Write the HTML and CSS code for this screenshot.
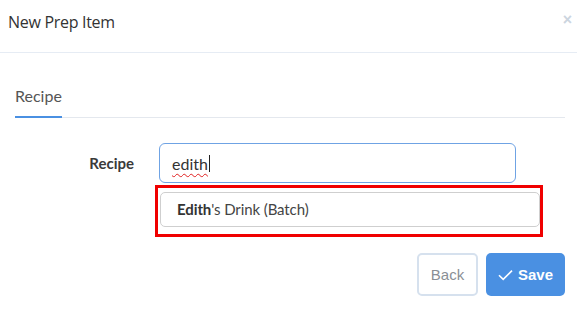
FILE: index.html
```html
<!DOCTYPE html>
<html>
<head>
<meta charset="utf-8">
<link rel="stylesheet" href="styles.css">
</head>
<body>
<div class="modal">
  <div class="modal-header">
    <div class="modal-title">New Prep Item</div>
    <div class="close">&times;</div>
  </div>
  <div class="modal-body">
    <div class="tabs">
      <div class="tab active">Recipe</div>
    </div>
    <div class="form-row">
      <label class="label">Recipe</label>
      <div class="field">
        <div class="input"><span class="typed">edith</span><span class="caret"></span></div>
        <div class="suggestions">
          <div class="suggestion"><b>Edith</b>'s Drink (Batch)</div>
        </div>
        <div class="highlight"></div>
      </div>
    </div>
    <div class="actions">
      <button class="btn btn-back">Back</button>
      <button class="btn btn-save"><svg class="check" width="15" height="12" viewBox="0 0 15 12"><path d="M1 6.2 L5.2 10.4 L14 1.6" fill="none" stroke="#fff" stroke-width="1.6"/></svg>Save</button>
    </div>
  </div>
</div>
</body>
</html>
```
FILE: styles.css
```css
* { box-sizing: border-box; }
body {
  margin: 0;
  background: #fff;
  font-family: "Open Sans", "Noto Sans", sans-serif;
  color: #333;
}
.modal {
  width: 577px;
  height: 311px;
  overflow: hidden;
}
.modal-header {
  height: 53px;
  border-bottom: 1px solid #e6ecf4;
  display: flex;
  align-items: flex-start;
  justify-content: space-between;
  padding: 10px 0 0 8px;
}
.modal-title {
  font-size: 16px;
  line-height: 24px;
  color: #333;
  letter-spacing: -0.3px;
}
.close {
  font-family: "Liberation Sans", sans-serif;
  font-size: 16px;
  font-weight: bold;
  line-height: 20px;
  color: #ccd5df;
  margin-right: 5px;
}
.modal-body {
  padding: 0 12px 0 15px;
}
.tabs {
  margin-top: 33px;
  border-bottom: 1px solid #e4e8ee;
  display: flex;
}
.tab {
  font-family: Lato, sans-serif;
  font-size: 16px;
  line-height: 20px;
  color: #555;
  padding: 0 0 10px 0;
  width: 47px;
}
.tab.active {
  border-bottom: 2px solid #4a90e2;
  margin-bottom: -1px;
}
.form-row {
  display: flex;
  margin-top: 25px;
  align-items: flex-start;
}
.label {
  width: 120px;
  text-align: right;
  font-family: Lato, sans-serif;
  font-weight: bold;
  font-size: 15px;
  line-height: 40px;
  color: #3a3a3a;
  padding-right: 1px;
}
.field {
  position: relative;
  margin-left: 24px;
  width: 357px;
}
.input {
  height: 40px;
  border: 1px solid #6fa3e4;
  border-radius: 6px;
  padding: 0 12px;
  font-family: Lato, sans-serif;
  font-size: 16px;
  line-height: 37px;
  color: #333;
  display: flex;
  align-items: center;
}
.typed {
  text-decoration: underline wavy #e02020;
  text-decoration-thickness: 1px;
  text-underline-offset: 3px;
}
.caret {
  display: inline-block;
  width: 1px;
  height: 17px;
  background: #222;
  margin-left: 1px;
}
.suggestions {
  position: absolute;
  left: 1px;
  top: 49px;
  width: 380px;
  background: #fff;
}
.suggestion {
  height: 35px;
  border: 1px solid #cfcfcf;
  border-radius: 5px;
  padding: 0 0 0 16px;
  font-family: Lato, sans-serif;
  font-size: 15px;
  letter-spacing: -0.1px;
  line-height: 33px;
  color: #444;
}
.suggestion b {
  font-weight: bold;
  color: #333;
}
.highlight {
  position: absolute;
  left: -4px;
  top: 42px;
  width: 388px;
  height: 52px;
  border: 3px solid #f00000;
  pointer-events: none;
}
.actions {
  display: flex;
  justify-content: flex-end;
  gap: 8px;
  margin-top: 70px;
}
.btn {
  height: 43px;
  border-radius: 5px;
  font-family: "Liberation Sans", "Open Sans", sans-serif;
  font-size: 15px;
  display: flex;
  align-items: center;
  justify-content: center;
  cursor: pointer;
}
.btn-back {
  width: 61px;
  background: #fff;
  border: 2px solid #d6e1ee;
  color: #8a8f95;
}
.btn-save {
  width: 79px;
  background: #4a90e2;
  border: none;
  color: #fff;
  font-weight: bold;
  gap: 5px;
}
```
